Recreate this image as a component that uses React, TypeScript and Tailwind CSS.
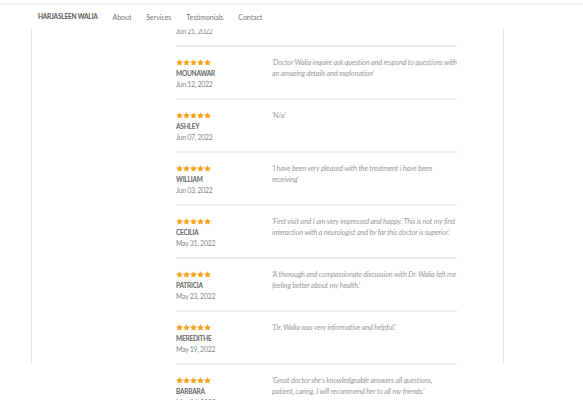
const reviews = [
	{ name: "Anonymous", date: "Jun 21, 2022", text: "" },
	{
		name: "Mounawar",
		date: "Jun 12, 2022",
		text: "'Doctor Walia inquire ask question and respond to questions with an amazing details and explonation'",
	},
	{ name: "Ashley", date: "Jun 07, 2022", text: "'N/a'" },
	{
		name: "William",
		date: "Jun 03, 2022",
		text: "'I have been very pleased with the treatment i have been receiving'",
	},
	{
		name: "Cecilia",
		date: "May 31, 2022",
		text: "'First visit and I am very impressed and happy. This is not my first interaction with a neurologist and by far this doctor is superior.'",
	},
	{
		name: "Patricia",
		date: "May 23, 2022",
		text: "'A thorough and compassionate discussion with Dr. Walia left me feeling better about my health.'",
	},
	{
		name: "Meredithe",
		date: "May 19, 2022",
		text: "'Dr. Walia was very informative and helpful.'",
	},
	{
		name: "Barbara",
		date: "May 16, 2022",
		text: "'Great doctor she’s knowledgeable answers all questions,\npatient, caring. I will recommend her to all my friends.'",
	},
];

const Star = () => (
	<svg width="7" height="7" viewBox="0 0 24 24" fill="#f7a21b">
		<path d="M12 .5l3.6 7.4 8 1.1-5.8 5.7 1.4 8L12 18.9l-7.2 3.8 1.4-8L.4 9l8-1.1z" />
	</svg>
);

const Stars = () => (
	<div className="flex h-[11px] items-center">
		{[0, 1, 2, 3, 4].map((i) => (
			<Star key={i} />
		))}
	</div>
);

export default function App() {
	return (
		<div
			className="flex h-[400px] w-[583px] flex-col overflow-hidden bg-white"
			style={{ fontFamily: "Lato, 'Open Sans', sans-serif" }}
		>
			<div className="h-[3px] shrink-0 bg-white" />
			<header className="flex h-[26px] shrink-0 items-center gap-[15px] border-t-2 border-[#efefef] pl-[38px] text-[7px] tracking-[-0.05px] text-[#777]">
				<span className="text-[6.5px] font-bold tracking-[-0.2px] text-[#555]">HARJASLEEN WALIA</span>
				<span>About</span>
				<span>Services</span>
				<span>Testimonials</span>
				<span>Contact</span>
			</header>

			<main className="flex-1 overflow-hidden">
				<section className="ml-[31px] h-full w-[473px] border-x border-[#e6e6e6] pl-[144px] pr-[46px]">
					<ul className="-mt-[37px]">
						{reviews.map(({ name, date, text }) => (
							<li
								className="flex border-t-2 border-[#eeeeee] pt-[10px] pb-[8px]"
								key={name}
							>
								<div className="w-[96px] shrink-0 leading-[11px]">
									<Stars />
									<p className="text-[6.5px] font-bold tracking-[-0.2px] uppercase text-[#666]">{name}</p>
									<p className="text-[7px] tracking-[-0.3px] text-[#888]">{date}</p>
								</div>
								<p className="w-[188px] shrink-0 whitespace-pre-line text-[7.25px] italic leading-[11px] tracking-[-0.15px] text-[#999]">
									{text}
								</p>
							</li>
						))}
					</ul>
				</section>
			</main>
		</div>
	);
}
